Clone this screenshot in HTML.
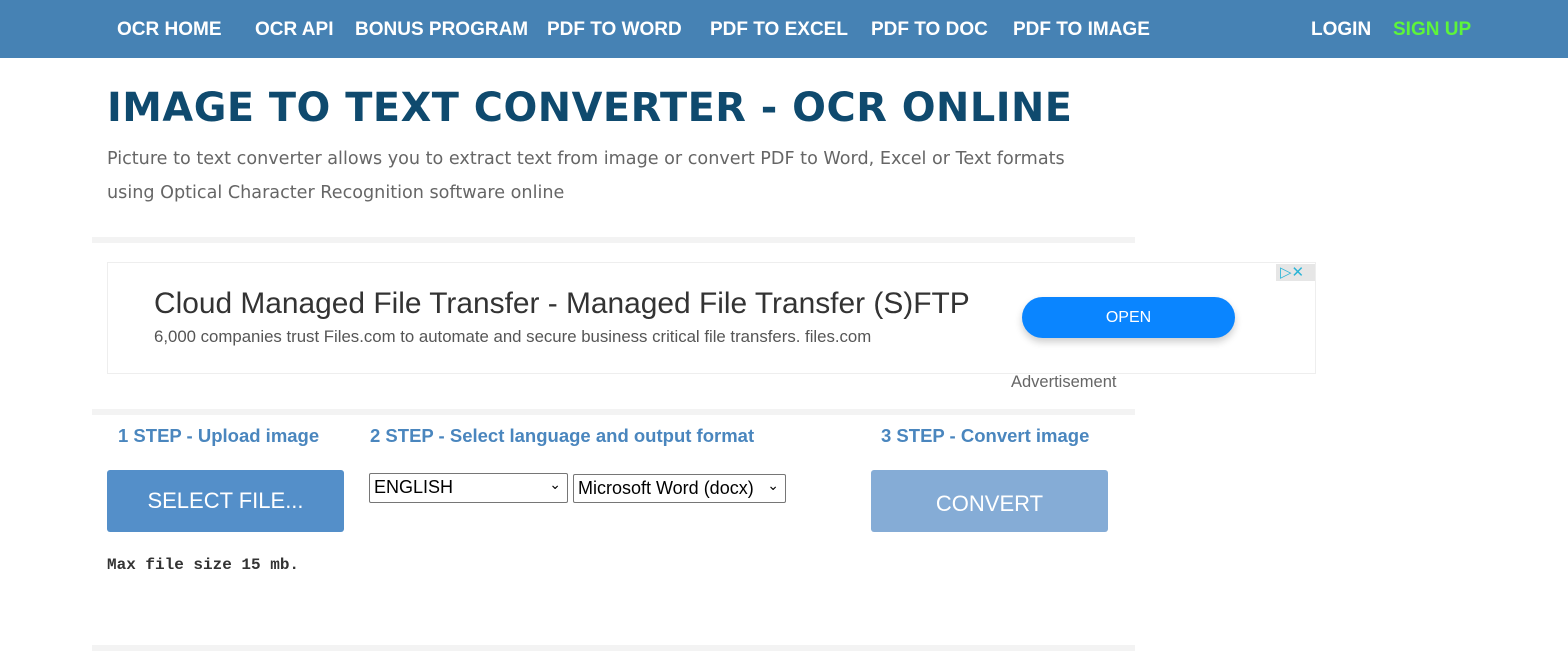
<!DOCTYPE html>
<html><head><meta charset="utf-8"><style>
*{margin:0;padding:0;box-sizing:border-box}
body{width:1568px;height:665px;background:#fff;font-family:"Liberation Sans",Arial,sans-serif;position:relative;overflow:hidden}
.a{position:absolute;white-space:nowrap}
.nav{position:absolute;left:0;top:0;width:1568px;height:58px;background:#4682b4}
.nav .a{color:#fff;font-weight:bold;font-size:19px;top:19px}
.bar{position:absolute;left:92px;width:1043px;height:6px;background:#f3f3f3}
.step{color:#4a86be;font-weight:bold;font-size:18.5px;top:425px}
.sel{position:absolute;border:1px solid #767676;border-radius:2px;background:#fff;font-size:18px;padding:3px 4px;color:#000}
.sel span{position:absolute;right:6px;top:2px;font-size:14px}
</style></head><body>
<div class="nav">
<div class="a" style="left:117px">OCR HOME</div>
<div class="a" style="left:255px">OCR API</div>
<div class="a" style="left:355px">BONUS PROGRAM</div>
<div class="a" style="left:547px">PDF TO WORD</div>
<div class="a" style="left:710px">PDF TO EXCEL</div>
<div class="a" style="left:871px">PDF TO DOC</div>
<div class="a" style="left:1013px">PDF TO IMAGE</div>
<div class="a" style="left:1311px">LOGIN</div>
<div class="a" style="left:1393px;color:#5df53a">SIGN UP</div>
</div>
<div class="a" style="left:107px;top:85px;font-size:39.8px;font-weight:bold;color:#0f4a6e;font-family:'DejaVu Sans',sans-serif;letter-spacing:0.5px">IMAGE TO TEXT CONVERTER - OCR ONLINE</div>
<div class="a" style="left:107px;top:142px;color:#666;line-height:34px;font-family:'DejaVu Sans',sans-serif;font-size:17.6px">Picture to text converter allows you to extract text from image or convert PDF to Word, Excel or Text formats<br>using Optical Character Recognition software online</div>
<div class="bar" style="top:237px"></div>
<div style="position:absolute;left:107px;top:262px;width:1209px;height:112px;border:1px solid #eee"></div>
<div class="a" style="left:154px;top:287px;font-size:29.9px;color:#333">Cloud Managed File Transfer - Managed File Transfer (S)FTP</div>
<div class="a" style="left:154px;top:327px;font-size:16.8px;color:#555">6,000 companies trust Files.com to automate and secure business critical file transfers. files.com</div>
<div style="position:absolute;left:1022px;top:297px;width:213px;height:41px;border-radius:21px;background:#0a85ff;box-shadow:0 4px 8px rgba(0,0,0,.2);color:#fff;text-align:center;line-height:41px;font-size:16px">OPEN</div>
<div style="position:absolute;left:1276px;top:264px;width:39px;height:17px;background:#e6e6e6;color:#2bb4d6;font-size:15px;line-height:17px;padding-left:4px">▷✕</div>
<div class="a" style="left:1011px;top:373px;font-size:16.5px;color:#666">Advertisement</div>
<div class="bar" style="top:409px"></div>
<div class="a step" style="left:118px">1 STEP - Upload image</div>
<div class="a step" style="left:370px">2 STEP - Select language and output format</div>
<div class="a step" style="left:881px">3 STEP - Convert image</div>
<div style="position:absolute;left:107px;top:470px;width:237px;height:62px;background:#548fc9;border-radius:3px;color:#fff;font-size:22px;text-align:center;line-height:62px">SELECT FILE...</div>
<div class="sel" style="left:369px;top:473px;width:199px;height:30px">ENGLISH<span>⌄</span></div>
<div class="sel" style="left:573px;top:474px;width:213px;height:29px">Microsoft Word (docx)<span>⌄</span></div>
<div style="position:absolute;left:871px;top:470px;width:237px;height:62px;background:#85acd6;border-radius:3px;color:#fff;font-size:22px;text-align:center;line-height:68px">CONVERT</div>
<div class="a" style="left:107px;top:556px;font-family:'Liberation Mono',monospace;font-weight:bold;font-size:16px;color:#333">Max file size 15 mb.</div>
<div class="bar" style="top:645px"></div>
</body></html>
